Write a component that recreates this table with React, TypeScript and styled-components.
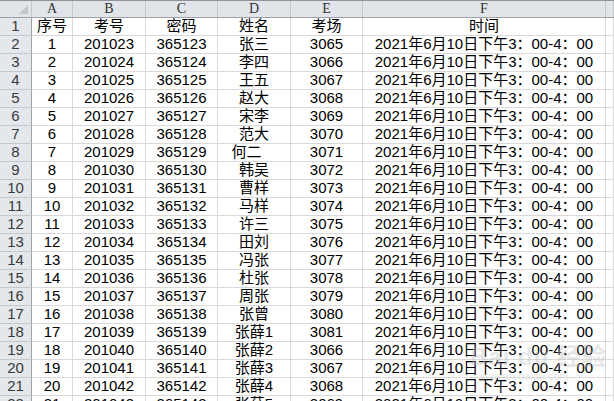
import React from "react";
import styled, { createGlobalStyle } from "styled-components";

const Global = createGlobalStyle`
  html, body { margin: 0; padding: 0; background: #ffffff; }
  body { width: 614px; height: 401px; overflow: hidden; }
`;

const COLS = "32px 41px 73px 72px 73px 72px 243px 1fr";

const Page = styled.div`
  position: relative;
  width: 614px;
  height: 401px;
  overflow: hidden;
  background: #fff;
  font-family: "Liberation Sans", "Noto Sans CJK SC", sans-serif;
`;

const HeaderRow = styled.div`
  display: grid;
  grid-template-columns: ${COLS};
  height: 18px;
  box-sizing: border-box;
  border-top: 1px solid #8f9296;
  border-bottom: 1px solid #9da2a8;
  background: #e1e5ea;
`;

const Corner = styled.div`
  position: relative;
  border-right: 1px solid #c4c8cd;
`;

const CornerTriangle = styled.div`
  position: absolute;
  right: 3px;
  bottom: 3px;
  width: 0;
  height: 0;
  border-left: 9px solid transparent;
  border-bottom: 9px solid #c3c7cc;
`;

const ColLetter = styled.div`
  display: flex;
  align-items: center;
  justify-content: center;
  border-right: 1px solid #c4c8cd;
  font-family: "Liberation Serif", "DejaVu Serif", serif;
  font-size: 14px;
  color: #333;
  line-height: 16px;
`;

const Row = styled.div`
  display: grid;
  grid-template-columns: ${COLS};
  height: 18px;
`;

const RowNum = styled.div`
  display: flex;
  align-items: flex-end;
  justify-content: center;
  box-sizing: border-box;
  background: #e4e8ed;
  border-right: 1px solid #9da2a8;
  border-bottom: 1px solid #c4c8cd;
  font-family: "Liberation Sans", sans-serif;
  font-size: 15px;
  line-height: 16px;
  color: #3a3a3a;
  padding-bottom: 1px;
`;

const Cell = styled.div<{ $pre?: boolean }>`
  display: flex;
  align-items: flex-end;
  justify-content: center;
  box-sizing: border-box;
  border-right: 1px solid #d9d9d9;
  border-bottom: 1px solid #d9d9d9;
  font-size: 15px;
  line-height: 16px;
  color: #000;
  white-space: ${(p) => (p.$pre ? "pre" : "nowrap")};
  padding-bottom: 1px;
`;

const Watermark = styled.div`
  position: absolute;
  left: 470px;
  top: 344px;
  display: flex;
  flex-direction: column;
  align-items: flex-start;
  color: rgba(190, 190, 190, 0.4);
  pointer-events: none;
`;

const WmMain = styled.div`
  font-family: "Liberation Sans", "Noto Sans CJK SC", sans-serif;
  font-size: 24px;
  font-weight: bold;
  line-height: 26px;
  letter-spacing: 1px;
`;

const WmSub = styled.div`
  font-family: "Liberation Sans", sans-serif;
  font-size: 11px;
  line-height: 12px;
  margin-left: 10px;
`;

const TIME = "2021年6月10日下午3：00-4：00";

const header = ["序号", "考号", "密码", "姓名", "考场", "时间"];

const names = [
  "张三", "李四", "王五", "赵大", "宋李", "范大", "何二　", "韩吴", "曹样", "马样",
  "许三", "田刘", "冯张", "杜张", "周张", "张曾", "张薛1", "张薛2", "张薛3", "张薛4", "张薛5",
];
const rooms = [
  3065, 3066, 3067, 3068, 3069, 3070, 3071, 3072, 3073, 3074, 3075, 3076, 3077, 3078,
  3079, 3080, 3081, 3066, 3067, 3068, 3069,
];

const rows: string[][] = [header.slice()];
for (let i = 0; i < 21; i++) {
  rows.push([
    String(i + 1),
    String(201023 + i),
    String(365123 + i),
    names[i],
    String(rooms[i]),
    TIME,
  ]);
}

export default function App() {
  return (
    <Page>
      <Global />
      <HeaderRow>
        <Corner>
          <CornerTriangle />
        </Corner>
        {["A", "B", "C", "D", "E", "F", ""].map((l, i) => (
          <ColLetter key={i}>{l}</ColLetter>
        ))}
      </HeaderRow>
      {rows.map((r, ri) => (
        <Row key={ri}>
          <RowNum>{ri + 1}</RowNum>
          {r.map((v, ci) => (
            <Cell key={ci} $pre={v.endsWith("　")}>
              {v}
            </Cell>
          ))}
          <Cell />
        </Row>
      ))}
      <Watermark>
        <WmMain>Bai du 经验</WmMain>
        <WmSub>jingyan.baidu.com</WmSub>
      </Watermark>
    </Page>
  );
}
